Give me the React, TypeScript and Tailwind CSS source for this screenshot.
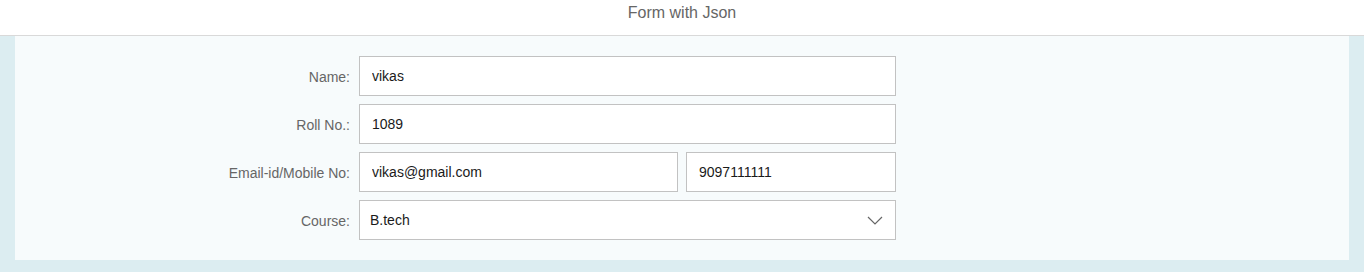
import { useState } from "react";

const FONT = { fontFamily: '"Liberation Sans", Arial, sans-serif' };

function Chevron() {
  return (
    <svg viewBox="0 0 16 9" className="h-[9px] w-[16px]" fill="none" aria-hidden>
      <path d="M1 1l7 7 7-7" stroke="#666" strokeWidth="1.2" />
    </svg>
  );
}

function Row({ label, children }: { label: string; children: React.ReactNode }) {
  return (
    <div className="flex items-center">
      <label className="w-[335px] pt-px text-right text-sm text-[#666]">{label}</label>
      <div className="ml-[9px] flex w-[537px] gap-2">{children}</div>
    </div>
  );
}

const inputCls =
  "h-10 border border-[#c2c2c2] bg-white px-3 text-sm text-[#1a1a1a] outline-none";

export default function App() {
  const [name, setName] = useState("vikas");
  const [roll, setRoll] = useState("1089");
  const [email, setEmail] = useState("vikas@gmail.com");
  const [mobile, setMobile] = useState("9097111111");
  const [course, setCourse] = useState("B.tech");

  return (
    <div className="flex h-[272px] w-full flex-col bg-[#dcedf1]" style={FONT}>
      <header className="flex h-9 shrink-0 items-start justify-center border-b border-[#d9d9d9] bg-white pt-px">
        <h1 className="text-base text-[#666]">Form with Json</h1>
      </header>
      <div className="px-[15px] pb-3">
        <div className="flex flex-col gap-2 bg-[#f7fbfc] py-5">
          <Row label="Name:">
            <input className={`${inputCls} w-full`} value={name} onChange={(e) => setName(e.target.value)} />
          </Row>
          <Row label="Roll No.:">
            <input className={`${inputCls} w-full`} value={roll} onChange={(e) => setRoll(e.target.value)} />
          </Row>
          <Row label="Email-id/Mobile No:">
            <input className={`${inputCls} w-[319px]`} value={email} onChange={(e) => setEmail(e.target.value)} />
            <input className={`${inputCls} w-[210px]`} value={mobile} onChange={(e) => setMobile(e.target.value)} />
          </Row>
          <Row label="Course:">
            <div className="relative w-full">
              <select
                className={`${inputCls} w-full appearance-none pl-[10px]`}
                value={course}
                onChange={(e) => setCourse(e.target.value)}
              >
                <option>B.tech</option>
                <option>M.tech</option>
                <option>MCA</option>
              </select>
              <span className="pointer-events-none absolute right-[13px] top-[16px] flex">
                <Chevron />
              </span>
            </div>
          </Row>
        </div>
      </div>
    </div>
  );
}
